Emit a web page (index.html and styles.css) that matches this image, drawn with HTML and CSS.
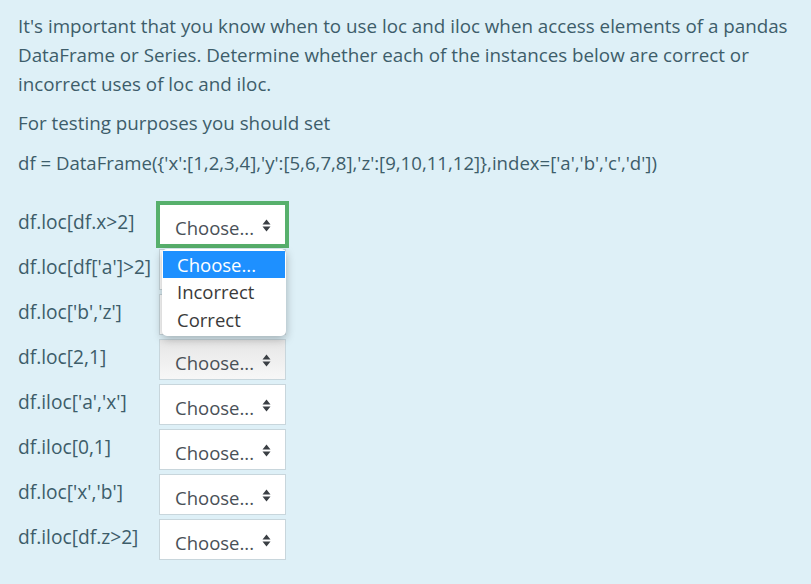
FILE: index.html
```html
<!DOCTYPE html>
<html>
<head>
<meta charset="utf-8">
<link rel="stylesheet" href="styles.css">
</head>
<body>
<div class="formulation">
  <p class="intro">It's important that you know when to use loc and iloc when access elements of a pandas DataFrame or Series. Determine whether each of the instances below are correct or incorrect uses of loc and iloc.</p>
  <p>For testing purposes you should set</p>
  <p class="code">df = DataFrame({'x':[1,2,3,4],'y':[5,6,7,8],'z':[9,10,11,12]},index=['a','b','c','d'])</p>
  <div class="rows">
    <div class="row">
      <span class="label">df.loc[df.x&gt;2]</span>
      <div class="cell">
        <div class="select focused"><span>Choose...</span><svg class="arrow" width="9" height="13" viewBox="0 0 9 13"><path d="M4.5 0.5 L8.5 5.5 L0.5 5.5 Z M0.5 7.5 L8.5 7.5 L4.5 12.5 Z" fill="#3a3f44"/></svg></div>
        <div class="dropdown">
          <div class="option active">Choose...</div>
          <div class="option">Incorrect</div>
          <div class="option">Correct</div>
        </div>
      </div>
    </div>
    <div class="row">
      <span class="label">df.loc[df['a']&gt;2]</span>
      <div class="cell"><div class="select covered"><span>Choose...</span><svg class="arrow" width="9" height="13" viewBox="0 0 9 13"><path d="M4.5 0.5 L8.5 5.5 L0.5 5.5 Z M0.5 7.5 L8.5 7.5 L4.5 12.5 Z" fill="#3a3f44"/></svg></div></div>
    </div>
    <div class="row">
      <span class="label">df.loc['b','z']</span>
      <div class="cell"><div class="select covered"><span>Choose...</span><svg class="arrow" width="9" height="13" viewBox="0 0 9 13"><path d="M4.5 0.5 L8.5 5.5 L0.5 5.5 Z M0.5 7.5 L8.5 7.5 L4.5 12.5 Z" fill="#3a3f44"/></svg></div></div>
    </div>
    <div class="row">
      <span class="label">df.loc[2,1]</span>
      <div class="cell"><div class="select shaded"><span>Choose...</span><svg class="arrow" width="9" height="13" viewBox="0 0 9 13"><path d="M4.5 0.5 L8.5 5.5 L0.5 5.5 Z M0.5 7.5 L8.5 7.5 L4.5 12.5 Z" fill="#3a3f44"/></svg></div></div>
    </div>
    <div class="row">
      <span class="label">df.iloc['a','x']</span>
      <div class="cell"><div class="select"><span>Choose...</span><svg class="arrow" width="9" height="13" viewBox="0 0 9 13"><path d="M4.5 0.5 L8.5 5.5 L0.5 5.5 Z M0.5 7.5 L8.5 7.5 L4.5 12.5 Z" fill="#3a3f44"/></svg></div></div>
    </div>
    <div class="row">
      <span class="label">df.iloc[0,1]</span>
      <div class="cell"><div class="select"><span>Choose...</span><svg class="arrow" width="9" height="13" viewBox="0 0 9 13"><path d="M4.5 0.5 L8.5 5.5 L0.5 5.5 Z M0.5 7.5 L8.5 7.5 L4.5 12.5 Z" fill="#3a3f44"/></svg></div></div>
    </div>
    <div class="row">
      <span class="label">df.loc['x','b']</span>
      <div class="cell"><div class="select"><span>Choose...</span><svg class="arrow" width="9" height="13" viewBox="0 0 9 13"><path d="M4.5 0.5 L8.5 5.5 L0.5 5.5 Z M0.5 7.5 L8.5 7.5 L4.5 12.5 Z" fill="#3a3f44"/></svg></div></div>
    </div>
    <div class="row">
      <span class="label">df.iloc[df.z&gt;2]</span>
      <div class="cell"><div class="select"><span>Choose...</span><svg class="arrow" width="9" height="13" viewBox="0 0 9 13"><path d="M4.5 0.5 L8.5 5.5 L0.5 5.5 Z M0.5 7.5 L8.5 7.5 L4.5 12.5 Z" fill="#3a3f44"/></svg></div></div>
    </div>
  </div>
</div>
</body>
</html>
```

FILE: styles.css
```css
html, body {
  margin: 0;
  padding: 0;
  background: #def0f7;
}
body {
  font-family: "Open Sans", "Noto Sans", sans-serif;
  font-size: 18.8px;
  color: #3d5d6a;
  width: 811px;
  height: 584px;
  overflow: hidden;
}
.formulation {
  padding: 12px 18px 0 18px;
}
p {
  margin: 0 0 10px 0;
  line-height: 29px;
  white-space: nowrap;
}
.intro {
  width: 790px;
  white-space: normal;
}
.code {
  font-size: 18.6px;
}
.rows {
  margin-top: 27px;
  display: flex;
  flex-direction: column;
  gap: 4px;
}
.row {
  display: grid;
  grid-template-columns: 141px 127px;
  align-items: center;
  height: 41px;
}
.label {
  padding-bottom: 6px;
  white-space: nowrap;
  font-size: 19.2px;
}
.cell {
  position: relative;
  height: 41px;
}
.select {
  box-sizing: border-box;
  height: 41px;
  width: 127px;
  background: #ffffff;
  border: 1px solid #c8d6dc;
  display: flex;
  align-items: center;
  justify-content: space-between;
  padding: 0 14px 0 15px;
  color: #495057;
  font-size: 18.5px;
}
.select span {
  padding-top: 5px;
}
.select .arrow {
  margin-top: 2px;
}
.select.covered span,
.select.covered .arrow {
  visibility: hidden;
}
.select.focused {
  box-shadow: 0 0 0 3px #57b06c;
  border-color: #57b06c;
}
.select.shaded {
  background: linear-gradient(#e6e6e6, #f7f7f7);
}
.dropdown {
  position: absolute;
  left: 3px;
  top: 45px;
  width: 124px;
  box-sizing: border-box;
  background: #ffffff;
  border-radius: 5px;
  padding: 2px 1px;
  box-shadow: 0 3px 10px rgba(0, 0, 0, 0.28);
  z-index: 5;
  font-size: 18.5px;
}
.option {
  height: 28px;
  line-height: 28px;
  padding-left: 14px;
  color: #3a3a3a;
}
.option.active {
  height: 27px;
  line-height: 27px;
  background: #1e90ff;
  color: #ffffff;
}
```
